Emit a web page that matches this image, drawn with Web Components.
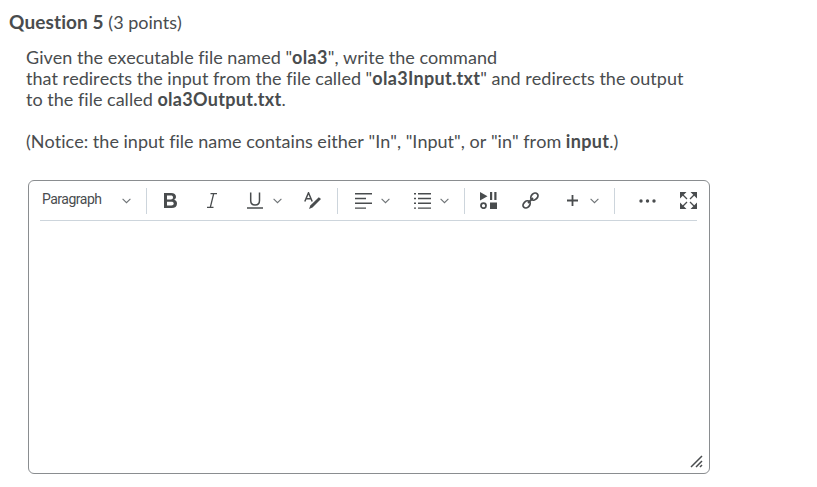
<!DOCTYPE html>
<html><head><meta charset="utf-8"><style>
html,body{margin:0;padding:0;background:#fff}
body{font-family:Lato,sans-serif;color:#494c4e;font-variant-ligatures:none;font-kerning:none}
</style></head><body>
<template id="tq"><style>
:host{display:block;width:817px;height:487px;box-sizing:border-box;padding:11px 0 0 9px;overflow:hidden}
.h{font-size:18px;line-height:22px;height:22px;margin:0}
.b{margin:14px 0 0 17px;font-size:18px;line-height:21px;width:695px;letter-spacing:.015px}
::slotted(q-editor){margin:28px 0 0 19px}
</style>
<div class="h"><slot name="title"></slot></div>
<div class="b"><slot name="body"></slot></div>
<slot name="editor"></slot></template>

<template id="te"><style>
:host{display:block;width:682px;height:294px;box-sizing:border-box;border:1px solid #8a8d90;border-radius:6px;position:relative;background:#fff}
.tb{display:flex;align-items:center;height:39px;margin:0 12px 0 11px;border-bottom:1px solid #cdd5dc;box-sizing:content-box}
svg{display:block;flex:none}
.grip{position:absolute;right:6px;bottom:5px}
</style>
<div class="tb"><slot></slot></div>
<svg class="grip" width="13" height="13" viewBox="0 0 13 13"><g stroke="#494c4e" stroke-width="1.5" fill="none"><path d="M1 12L12 1M6 12L12 6M10 12L12 10"/></g></svg>
</template>

<script>
function shadow(el,id){const r=el.attachShadow({mode:'open'});r.appendChild(document.getElementById(id).content.cloneNode(true));return r}
class QPage extends HTMLElement{constructor(){super();shadow(this,'tq')}}
class QEditor extends HTMLElement{constructor(){super();shadow(this,'te')}}
const CH='<svg width="9" height="6" viewBox="0 0 9 6"><path d="M.6 .8l3.900 3.900 3.900-3.900" fill="none" stroke="#6e7376" stroke-width="1.100"/></svg>';
const G={
bold:'<svg width="13" height="15" viewBox="0 0 13 15"><path fill-rule="evenodd" fill="#494c4e" d="M0 0h7.200c3 0 4.800 1.300 4.800 3.800 0 1.400-.7 2.500-1.900 3 1.700.5 2.900 1.700 2.900 3.600 0 2.900-2 4.600-5.300 4.600H0zM3 2.500v3.900h3.900c1.300 0 2.100-.7 2.100-2s-.8-1.900-2.100-1.900zM3 8.800v3.700h4.300c1.500 0 2.400-.7 2.400-1.900s-.9-1.800-2.400-1.800z"/></svg>',
ital:'<svg width="10" height="15" viewBox="0 0 10 15"><path fill="none" stroke="#494c4e" stroke-width="1.300" d="M3.500 .7H10M0 14.300H6.500M6.700 .7L3.300 14.300"/></svg>',
und:'<svg width="16" height="17" viewBox="0 0 16 17"><path fill="none" stroke="#494c4e" stroke-width="1.500" d="M3.700 .5v8c0 3 1.700 4.500 4.400 4.500s4.400-1.500 4.400-4.500v-8"/><path stroke="#494c4e" stroke-width="1.500" d="M0 16h16"/></svg>',
color:'<svg width="17" height="17" viewBox="0 0 17 17"><path fill="none" stroke="#494c4e" stroke-width="1.500" d="M.8 9.500L4.500 .8 8.200 9.500M2 6.700h5"/><path fill="#494c4e" d="M14.800 5.200L17 7 8.500 15.500 5 17l1.300-3.500z"/></svg>',
align:'<svg width="17" height="16" viewBox="0 0 17 16"><path stroke="#494c4e" stroke-width="1.400" d="M0 .8h17M0 5.500h11M0 10.300h17M0 15.100h11"/></svg>',
list:'<svg width="17" height="16" viewBox="0 0 17 16"><path stroke="#494c4e" stroke-width="1.400" d="M4 .8h13M4 5.500h13M4 10.300h13M4 15.100h13M0 .8h2M0 5.500h2M0 10.300h2M0 15.100h2"/></svg>',
media:'<svg width="17" height="17" viewBox="0 0 17 17"><path fill="#494c4e" d="M0 0l7.500 4.200L0 8.500zM10 0h2.200v8H10zM14.300 0h2.200v8h-2.200zM10 10.500h7V17h-7z"/><circle cx="3.500" cy="13.700" r="2.500" fill="none" stroke="#494c4e" stroke-width="1.800"/></svg>',
link:'<svg width="17" height="17" viewBox="0 0 17 17"><g fill="none" stroke="#494c4e" stroke-width="1.800"><ellipse cx="4.600" cy="12.400" rx="4" ry="3" transform="rotate(-45 4.600 12.400)"/><ellipse cx="12.400" cy="4.600" rx="4" ry="3" transform="rotate(-45 12.400 4.600)"/><path d="M6 11L11 6"/></g></svg>',
plus:'<svg width="11" height="11" viewBox="0 0 11 11"><path stroke="#494c4e" stroke-width="1.800" d="M5.500 0v11M0 5.500h11"/></svg>',
more:'<svg width="17" height="4" viewBox="0 0 17 4"><g fill="#494c4e"><circle cx="2" cy="2" r="1.700"/><circle cx="8.500" cy="2" r="1.700"/><circle cx="15" cy="2" r="1.700"/></g></svg>',
full:'<svg width="17" height="17" viewBox="0 0 17 17"><g fill="#494c4e"><path d="M0 0h6.500L0 6.500zM17 0v6.500L10.500 0zM0 17v-6.500L6.500 17zM17 17h-6.500L17 10.500z"/></g><path stroke="#494c4e" stroke-width="1.300" d="M3 3l4 4M14 3l-4 4M3 14l4-4M14 14l-4-4"/></svg>'};
class QTool extends HTMLElement{constructor(){super();this.attachShadow({mode:'open'})}
connectedCallback(){const g=this.getAttribute('g'),w=this.getAttribute('w'),p=this.getAttribute('pl')||0,c=this.hasAttribute('chev'),cg=this.getAttribute('cg')||9;
this.shadowRoot.innerHTML=`<style>:host{display:flex;align-items:center;flex:none;height:39px;width:${w}px;box-sizing:border-box;padding-left:${p}px;gap:${cg}px}svg{display:block;flex:none}</style>${G[g]}${c?CH:''}`}}
class QLabelTool extends HTMLElement{constructor(){super();const r=this.attachShadow({mode:'open'});r.innerHTML=`<style>:host{display:flex;align-items:center;flex:none;height:39px;width:106px;box-sizing:border-box;padding-left:2px;font:400 14px/37px Roboto,sans-serif;color:#494c4e;letter-spacing:-.5px}.t{width:80px;height:39px}svg{display:block}</style><span class="t"><slot></slot></span>${CH}`}}
class QSep extends HTMLElement{constructor(){super();const r=this.attachShadow({mode:'open'});r.innerHTML=`<style>:host{display:block;flex:none;width:1px;height:26px;background:#cdd5dc}</style>`}}
customElements.define('q-page',QPage);customElements.define('q-editor',QEditor);customElements.define('q-tool',QTool);customElements.define('q-label-tool',QLabelTool);customElements.define('q-sep',QSep);
</script>
<q-page>
<span slot="title"><b style="font-size:19px;letter-spacing:.1px">Question 5</b> (3 points)</span>
<div slot="body">
<p style="margin:0 0 21px">Given the executable file named "<b style="letter-spacing:.3px">ola3</b>", write the command<br>that redirects the input from the file called "<b style="letter-spacing:.3px">ola3Input.txt</b>" and redirects the output<br>to the file called <b style="letter-spacing:.3px">ola3Output.txt</b>.</p>
<p style="margin:0">(Notice: the input file name contains either "In", "Input", or "in" from <b style="letter-spacing:.3px">input</b>.)</p>
</div>
<q-editor slot="editor">
<q-label-tool>Paragraph</q-label-tool><q-sep></q-sep>
<q-tool g="bold" w="60" pl="17"></q-tool>
<q-tool g="ital" w="40"></q-tool>
<q-tool g="und" w="57" cg="10" chev></q-tool>
<q-tool g="color" w="33"></q-tool>
<q-sep></q-sep>
<q-tool g="align" w="76" pl="17" chev></q-tool>
<q-tool g="list" w="50" chev></q-tool>
<q-sep></q-sep>
<q-tool g="media" w="57" pl="15"></q-tool>
<q-tool g="link" w="45"></q-tool>
<q-tool g="plus" w="47" cg="12" chev></q-tool>
<q-sep></q-sep>
<q-tool g="more" w="65" pl="24"></q-tool>
<q-tool g="full" w="17"></q-tool>
</q-editor>
</q-page>
</body></html>
